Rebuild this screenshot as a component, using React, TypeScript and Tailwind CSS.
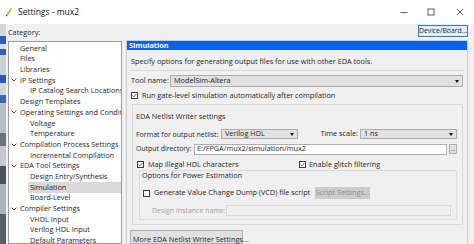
import { FC } from "react";

type TreeItem = { label: string; level: 0 | 1; open?: boolean; selected?: boolean };

const tree: TreeItem[] = [
    { label: "General", level: 0 },
    { label: "Files", level: 0 },
    { label: "Libraries", level: 0 },
    { label: "IP Settings", level: 0, open: true },
    { label: "IP Catalog Search Locations", level: 1 },
    { label: "Design Templates", level: 0 },
    { label: "Operating Settings and Conditions", level: 0, open: true },
    { label: "Voltage", level: 1 },
    { label: "Temperature", level: 1 },
    { label: "Compilation Process Settings", level: 0, open: true },
    { label: "Incremental Compilation", level: 1 },
    { label: "EDA Tool Settings", level: 0, open: true },
    { label: "Design Entry/Synthesis", level: 1 },
    { label: "Simulation", level: 1, selected: true },
    { label: "Board-Level", level: 1 },
    { label: "Compiler Settings", level: 0, open: true },
    { label: "VHDL Input", level: 1 },
    { label: "Verilog HDL Input", level: 1 },
    { label: "Default Parameters", level: 1 },
];

// bits of the desktop window showing on the left edge
const strip = [
    { h: 12, c: "bg-[#cfd6e0]" },
    { h: 8, c: "bg-[#2a5fc0]" },
    { h: 5, c: "bg-[#d8dde5]" },
    { h: 6, c: "bg-[#3160b8]" },
    { h: 20, c: "bg-[#c9d0da]" },
    { h: 8, c: "bg-[#2c58b0]" },
    { h: 12, c: "bg-[#d3d7dd]" },
    { h: 8, c: "bg-[#3a64b5]" },
    { h: 30, c: "bg-[#b9bec6]" },
    { h: 14, c: "bg-[#6d737c]" },
    { h: 20, c: "bg-[#c5c9cf]" },
    { h: 18, c: "bg-[#4b5058]" },
    { h: 30, c: "bg-[#aeb3ba]" },
    { h: 30, c: "bg-[#5a6069]" },
];

const Chevron: FC = () => (
    <svg viewBox="0 0 6 4" className="h-[4px] w-[6px]">
        <path d="M0.6 0.6 L3 3 L5.4 0.6" fill="none" stroke="#333" strokeWidth="0.9" />
    </svg>
);

const Arrow: FC = () => (
    <svg viewBox="0 0 4 3" className="h-[3px] w-[4px] shrink-0">
        <path d="M0 0 H4 L2 3 Z" fill="#111" />
    </svg>
);

const Check: FC<{ checked?: boolean }> = ({ checked }) => (
    <span className="flex h-[7px] w-[7px] shrink-0 items-center justify-center border border-[#3c3c3c] bg-white">
        {checked && (
            <svg viewBox="0 0 6 6" className="h-[5px] w-[5px]">
                <path d="M0.7 3.1 L2.3 4.7 L5.3 1.1" fill="none" stroke="#222" strokeWidth="0.8" />
            </svg>
        )}
    </span>
);

const Combo: FC<{ value: string; className?: string }> = ({ value, className }) => (
    <div className={`flex shrink-0 items-center justify-between border border-[#adadad] bg-[#e1e1e1] pl-[3px] pr-[3px] ${className ?? ""}`}>
        <span className="whitespace-nowrap">{value}</span>
        <Arrow />
    </div>
);

const App: FC = () => {
    return (
        <div className="flex h-[244px] w-[474px] flex-col overflow-hidden bg-[#f0f0f0] font-['Open_Sans','Noto_Sans',sans-serif] text-[7.3px] leading-none text-[#1e1e1e]">
            {/* Title bar */}
            <div className="flex h-[24px] shrink-0 items-center bg-white">
                <svg viewBox="0 0 8 10" className="ml-[5px] h-[10px] w-[8px]">
                    <path d="M1.5 8.8 L6.5 1.2" stroke="#e0a52a" strokeWidth="1.6" />
                    <path d="M1.2 9.2 L1.9 8.2" stroke="#555" strokeWidth="1.2" />
                </svg>
                <span className="ml-[5px] text-[8.5px] text-[#111]">Settings - mux2</span>
                <div className="ml-auto flex items-center">
                    <svg viewBox="0 0 8 8" className="h-[8px] w-[8px]">
                        <path d="M0.5 4.5 H7.5" stroke="#333" strokeWidth="0.8" />
                    </svg>
                    <svg viewBox="0 0 8 8" className="ml-[19px] h-[8px] w-[8px]">
                        <rect x="1" y="1" width="6" height="6" fill="none" stroke="#333" strokeWidth="0.8" />
                    </svg>
                    <svg viewBox="0 0 8 8" className="ml-[21px] mr-[10px] h-[8px] w-[8px]">
                        <path d="M1 1 L7 7 M7 1 L1 7" stroke="#333" strokeWidth="0.8" />
                    </svg>
                </div>
            </div>

            <div className="flex min-h-0 flex-1">
                {/* desktop behind the dialog */}
                <div className="flex w-[6px] shrink-0 flex-col">
                    {strip.map((s, i) => (
                        <div key={ i } className={ s.c } style={{ height: s.h }} />
                    ))}
                </div>

                {/* Category tree */}
                <div className="ml-[2px] flex w-[114px] shrink-0 flex-col">
                    <div className="flex h-[17px] items-center">Category:</div>
                    <div className="flex-1 overflow-hidden border border-[#9c9c9c] bg-white pt-[1px]">
                        {tree.map((item) => (
                            item.level === 0 ? (
                                <div key={ item.label } className="flex h-[10.7px] items-center pl-[2px]">
                                    <span className="flex w-[9px] shrink-0 items-center">
                                        {item.open && <Chevron />}
                                    </span>
                                    <span className="whitespace-nowrap">{ item.label }</span>
                                </div>
                            ) : (
                                <div key={ item.label } className="flex h-[10.7px] items-center pl-[19px]">
                                    <span className={ `flex h-full flex-1 items-center whitespace-nowrap pl-[2px] ${item.selected ? "bg-[#d9d9d9]" : ""}` }>
                                        { item.label }
                                    </span>
                                </div>
                            )
                        ))}
                    </div>
                </div>

                {/* Settings page */}
                <div className="ml-[4px] flex w-[342px] shrink-0 flex-col">
                    <div className="flex h-[16px] items-start justify-end pt-[1px]">
                        <div className="flex h-[12px] w-[50px] items-center justify-center border border-[#2f7bd6] bg-[#e5eef8] text-[6.8px]">
                            Device/Board...
                        </div>
                    </div>
                    <div className="flex flex-1 flex-col border border-b-0 border-[#cdcdcd] px-[3px]">
                        <div className="-mx-[3px] flex h-[9px] items-center bg-[#0b62e8] pl-[2px] font-bold text-white">
                            Simulation
                        </div>

                        <div className="mt-[6px] flex h-[11px] items-center pl-[1px]">
                            Specify options for generating output files for use with other EDA tools.
                        </div>
                        <div className="mt-[3px] h-px bg-[#d6d6d6]" />

                        <div className="mt-[4px] flex h-[12px] items-center pl-[1px] pr-[1px]">
                            <span className="w-[39px] shrink-0 whitespace-nowrap">Tool name:</span>
                            <Combo value="ModelSim-Altera" className="h-[12px] flex-1" />
                        </div>

                        <div className="mt-[3px] flex h-[11px] items-center gap-[4px] pl-[1px]">
                            <Check checked />
                            <span className="whitespace-nowrap">Run gate-level simulation automatically after compilation</span>
                        </div>

                        {/* EDA Netlist Writer settings */}
                        <div className="ml-[2px] mr-[1px] mt-[3px] flex flex-col border border-[#d8d8d8] pb-[4px] pl-[3px] pr-[5px]">
                            <div className="mt-[6px] flex h-[11px] items-center whitespace-nowrap">EDA Netlist Writer settings</div>

                            <div className="mt-[7px] flex h-[10px] items-center">
                                <span className="w-[85px] shrink-0 whitespace-nowrap text-[7px]">Format for output netlist:</span>
                                <Combo value="Verilog HDL" className="h-[10px] w-[77px]" />
                                <span className="ml-auto mr-[2px] whitespace-nowrap">Time scale:</span>
                                <Combo value="1 ns" className="h-[10px] w-[97px]" />
                            </div>

                            <div className="mt-[5px] flex h-[10px] items-center">
                                <span className="w-[58px] shrink-0 whitespace-nowrap text-[6.9px]">Output directory:</span>
                                <div className="flex h-[11px] flex-1 items-center whitespace-nowrap border border-[#adadad] bg-white pl-[2px]">
                                    E:/FPGA/mux2/simulation/mux2
                                </div>
                                <div className="ml-[2px] flex h-[10px] w-[8px] shrink-0 items-end justify-center border border-[#adadad] bg-[#e1e1e1] pb-[1px] text-[6px]">
                                    ...
                                </div>
                            </div>

                            <div className="mt-[5px] flex h-[11px] items-center pl-[1px]">
                                <div className="flex w-[162px] shrink-0 items-center gap-[4px]">
                                    <Check checked />
                                    <span className="whitespace-nowrap">Map illegal HDL characters</span>
                                </div>
                                <div className="flex items-center gap-[3px]">
                                    <Check checked />
                                    <span className="whitespace-nowrap">Enable glitch filtering</span>
                                </div>
                            </div>

                            {/* Options for Power Estimation */}
                            <div className="ml-[3px] flex flex-col border border-[#dcdcdc] pb-[3px] pl-[2px] pr-[5px]">
                                <div className="flex h-[10px] items-center whitespace-nowrap">Options for Power Estimation</div>
                                <div className="mt-[6px] flex h-[12px] items-center pl-[1px]">
                                    <Check />
                                    <span className="ml-[4px] whitespace-nowrap">Generate Value Change Dump (VCD) file script</span>
                                    <div className="ml-[5px] flex h-[12px] w-[55px] shrink-0 items-center justify-center whitespace-nowrap bg-[#cccccc] text-[#8c8c8c]">
                                        Script Settings...
                                    </div>
                                </div>
                                <div className="mt-[6px] flex h-[11px] items-center pl-[10px]">
                                    <span className="w-[74px] shrink-0 whitespace-nowrap text-[7px] text-[#a0a0a0]">Design instance name:</span>
                                    <div className="h-[11px] flex-1 border border-[#d9d9d9] bg-[#f0f0f0]" />
                                </div>
                            </div>
                        </div>

                        <div className="mt-[5px] flex h-[14px] w-[113px] items-start border border-[#adadad] bg-[#e1e1e1] pl-[2px] pt-[5px]">
                            <span className="whitespace-nowrap">More EDA Netlist Writer Settings...</span>
                        </div>
                    </div>
                </div>
            </div>
        </div>
    );
};

export default App;
